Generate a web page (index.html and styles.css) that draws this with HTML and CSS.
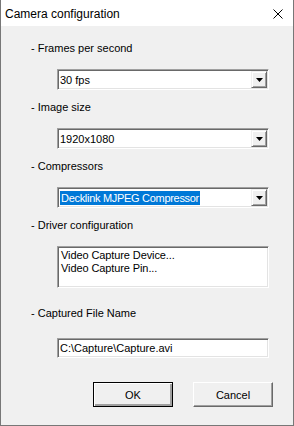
FILE: index.html
```html
<!DOCTYPE html>
<html lang="en">
<head>
  <meta charset="UTF-8" />
  <title>Camera configuration</title>
  <link rel="stylesheet" href="styles.css">
</head>
<body>
  <div class="window">
    <div class="titlebar">
      <span class="title">Camera configuration</span>
      <svg class="close" width="10" height="10" viewBox="0 0 10 10">
        <path d="M0.5 0.5 L9.5 9.5 M9.5 0.5 L0.5 9.5" stroke="#000" stroke-width="1" fill="none"/>
      </svg>
    </div>

    <div class="content">
      <div class="group">
        <div class="label">- Frames per second</div>
        <div class="combo">
          <span class="value">30 fps</span>
          <span class="drop"><svg width="7" height="4" viewBox="0 0 7 4"><polygon points="0,0 7,0 3.5,4" fill="#000"/></svg></span>
        </div>
      </div>

      <div class="group">
        <div class="label">- Image size</div>
        <div class="combo">
          <span class="value">1920x1080</span>
          <span class="drop"><svg width="7" height="4" viewBox="0 0 7 4"><polygon points="0,0 7,0 3.5,4" fill="#000"/></svg></span>
        </div>
      </div>

      <div class="group">
        <div class="label">- Compressors</div>
        <div class="combo">
          <span class="value"><span class="selected">Decklink MJPEG Compressor</span></span>
          <span class="drop"><svg width="7" height="4" viewBox="0 0 7 4"><polygon points="0,0 7,0 3.5,4" fill="#000"/></svg></span>
        </div>
      </div>

      <div class="group">
        <div class="label">- Driver configuration</div>
        <div class="listbox">
          <div class="item">Video Capture Device...</div>
          <div class="item">Video Capture Pin...</div>
        </div>
      </div>

      <div class="group file-group">
        <div class="label">- Captured File Name</div>
        <div class="textbox">C:\Capture\Capture.avi</div>
      </div>

      <div class="buttons">
        <button class="btn btn-default">OK</button>
        <button class="btn">Cancel</button>
      </div>
    </div>
  </div>
</body>
</html>
```

FILE: styles.css
```css
body {
  margin: 0;
  font-family: 'Liberation Sans', Arial, sans-serif;
  font-size: 11px;
  color: #000;
}
.window {
  width: 294px;
  height: 426px;
  box-sizing: border-box;
  border: 1px solid #777;
  border-top: none;
  background: #f0f0f0;
  display: flex;
  flex-direction: column;
}
.titlebar {
  height: 26px;
  background: #fff;
  display: flex;
  align-items: center;
  justify-content: space-between;
  padding: 0 10px 0 4px;
  flex-shrink: 0;
}
.title {
  font-size: 12px;
  line-height: 26px;
  padding-top: 1px;
}
.close {
  display: block;
  margin-top: 2px;
}
.content {
  padding: 16px 20px 0 30px;
  display: flex;
  flex-direction: column;
}
.group {
  display: flex;
  flex-direction: column;
  gap: 14px;
  margin-bottom: 11px;
}
.label {
  line-height: 13px;
  height: 13px;
}
.combo, .listbox, .textbox {
  margin-left: 26px;
  width: 212px;
  box-sizing: border-box;
  background: #fff;
  border: 1px solid;
  border-color: #a0a0a0 #fff #fff #a0a0a0;
  box-shadow: inset 1px 1px 0 #696969, inset -1px -1px 0 #e3e3e3;
  padding: 1px;
}
.combo {
  height: 21px;
  display: flex;
  align-items: stretch;
}
.value {
  flex: 1;
  display: flex;
  align-items: center;
  padding-left: 1px;
  white-space: nowrap;
}
.selected {
  background: #0078d7;
  color: #fff;
  padding: 0 1px;
  line-height: 14px;
  letter-spacing: -0.3px;
}
.drop {
  width: 16px;
  box-sizing: border-box;
  background: #f0f0f0;
  border: 1px solid;
  border-color: #f0f0f0 #696969 #696969 #f0f0f0;
  box-shadow: inset 1px 1px 0 #fff, inset -1px -1px 0 #a0a0a0;
  display: flex;
  align-items: center;
  justify-content: center;
}
.drop svg {
  display: block;
  margin-top: 1px;
}
.listbox {
  height: 42px;
  padding: 2px;
}
.item {
  line-height: 13px;
  padding-left: 1px;
  letter-spacing: -0.1px;
}
.file-group {
  margin-top: 8px;
  gap: 18px;
}
.textbox {
  height: 20px;
  line-height: 16px;
  padding-left: 2px;
}
.buttons {
  display: flex;
  justify-content: flex-end;
  gap: 20px;
  margin-top: 13px;
}
.btn {
  width: 80px;
  height: 25px;
  box-sizing: border-box;
  font-family: 'Liberation Sans', Arial, sans-serif;
  font-size: 11px;
  color: #000;
  background: #f0f0f0;
  border: 1px solid;
  border-color: #fff #696969 #696969 #fff;
  box-shadow: inset -1px -1px 0 #a0a0a0;
  padding: 0;
}
.btn-default {
  border: 1px solid #000;
  box-shadow: inset 1px 1px 0 #fff, inset -2px -2px 0 #a0a0a0;
}
```
